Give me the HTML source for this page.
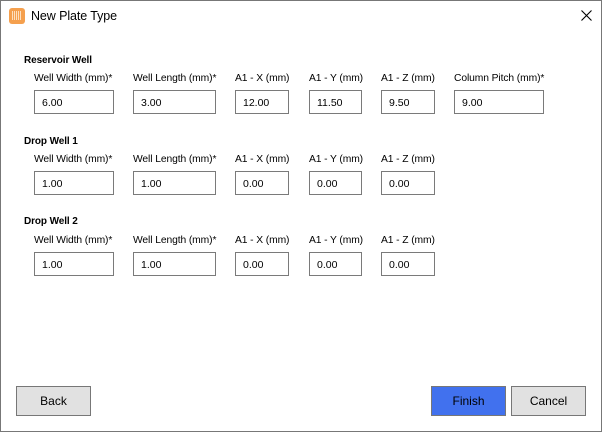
<!DOCTYPE html>
<html><head><style>
body{margin:0;width:602px;height:432px;overflow:hidden;background:#fff;font-family:"Liberation Sans",sans-serif;}
.win{position:absolute;left:0;top:0;width:600px;height:430px;border:1px solid #777;background:#fff;}
.t{position:absolute;font-size:10.3px;color:#000;white-space:nowrap;letter-spacing:-0.1px;}
.h{font-weight:bold;font-size:10px;}
.i{position:absolute;height:24px;border:1px solid #7a7a7a;box-sizing:border-box;font-size:10.5px;padding:6px 0 0 7px;}
.b{position:absolute;top:385px;width:75px;height:30px;box-sizing:border-box;border:1px solid #777;background:#e1e1e1;font-size:12px;text-align:center;line-height:28px;}
</style></head><body><div class="win">
<div style="position:absolute;left:8px;top:7px;width:16px;height:16px;background:#f5a04e;border-radius:3px;"><div style="position:absolute;left:3px;top:3px;width:10px;height:9px;background:repeating-linear-gradient(90deg,#fde0c0 0 1px,#f5a04e 1px 2px);"></div></div>
<div class="t" style="left:30px;top:8px;font-size:12.5px;">New Plate Type</div>
<svg style="position:absolute;left:580px;top:9px" width="11" height="11"><path d="M0.5 0.5L10.5 10.5M10.5 0.5L0.5 10.5" stroke="#000" stroke-width="1.1"/></svg>

<div class="t h" style="left:23px;top:54px;">Reservoir Well</div>
<div class="t" style="left:33px;top:72px;">Well Width (mm)*</div>
<div class="t" style="left:132px;top:72px;">Well Length (mm)*</div>
<div class="t" style="left:234px;top:72px;">A1 - X (mm)</div>
<div class="t" style="left:308px;top:72px;">A1 - Y (mm)</div>
<div class="t" style="left:380px;top:72px;">A1 - Z (mm)</div>
<div class="t" style="left:453px;top:72px;">Column Pitch (mm)*</div>
<div class="i" style="left:33px;top:89px;width:80px;">6.00</div>
<div class="i" style="left:132px;top:89px;width:83px;">3.00</div>
<div class="i" style="left:234px;top:89px;width:54px;">12.00</div>
<div class="i" style="left:308px;top:89px;width:53px;">11.50</div>
<div class="i" style="left:380px;top:89px;width:54px;">9.50</div>
<div class="i" style="left:453px;top:89px;width:90px;">9.00</div>

<div class="t h" style="left:23px;top:135px;">Drop Well 1</div>
<div class="t" style="left:33px;top:153px;">Well Width (mm)*</div>
<div class="t" style="left:132px;top:153px;">Well Length (mm)*</div>
<div class="t" style="left:234px;top:153px;">A1 - X (mm)</div>
<div class="t" style="left:308px;top:153px;">A1 - Y (mm)</div>
<div class="t" style="left:380px;top:153px;">A1 - Z (mm)</div>
<div class="i" style="left:33px;top:170px;width:80px;">1.00</div>
<div class="i" style="left:132px;top:170px;width:83px;">1.00</div>
<div class="i" style="left:234px;top:170px;width:54px;">0.00</div>
<div class="i" style="left:308px;top:170px;width:53px;">0.00</div>
<div class="i" style="left:380px;top:170px;width:54px;">0.00</div>

<div class="t h" style="left:23px;top:215px;">Drop Well 2</div>
<div class="t" style="left:33px;top:234px;">Well Width (mm)*</div>
<div class="t" style="left:132px;top:234px;">Well Length (mm)*</div>
<div class="t" style="left:234px;top:234px;">A1 - X (mm)</div>
<div class="t" style="left:308px;top:234px;">A1 - Y (mm)</div>
<div class="t" style="left:380px;top:234px;">A1 - Z (mm)</div>
<div class="i" style="left:33px;top:251px;width:80px;">1.00</div>
<div class="i" style="left:132px;top:251px;width:83px;">1.00</div>
<div class="i" style="left:234px;top:251px;width:54px;">0.00</div>
<div class="i" style="left:308px;top:251px;width:53px;">0.00</div>
<div class="i" style="left:380px;top:251px;width:54px;">0.00</div>

<div class="b" style="left:15px;">Back</div>
<div class="b" style="left:430px;background:#4171ee;">Finish</div>
<div class="b" style="left:510px;">Cancel</div>
</div></body></html>
